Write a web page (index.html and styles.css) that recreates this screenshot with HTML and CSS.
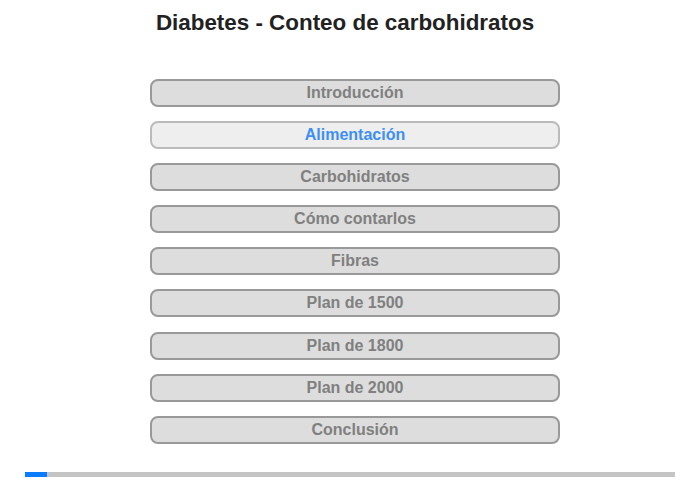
FILE: index.html
```html
<!DOCTYPE html>
<html lang="es">
<head>
    <meta charset="UTF-8">
    <meta name="viewport" content="width=device-width, initial-scale=1.0">
    <title>Diabetes - Conteo de carbohidratos</title>
    <link rel="stylesheet" href="styles.css">
</head>
<body>
    <h1 class="title">Diabetes - Conteo de carbohidratos</h1>

    <nav class="menu">
        <a href="#" class="menu-item">Introducción</a>
        <a href="#" class="menu-item active">Alimentación</a>
        <a href="#" class="menu-item">Carbohidratos</a>
        <a href="#" class="menu-item">Cómo contarlos</a>
        <a href="#" class="menu-item">Fibras</a>
        <a href="#" class="menu-item">Plan de 1500</a>
        <a href="#" class="menu-item">Plan de 1800</a>
        <a href="#" class="menu-item">Plan de 2000</a>
        <a href="#" class="menu-item">Conclusión</a>
    </nav>

    <div class="progress">
        <div class="progress-fill" style="width: 22px;"></div>
    </div>
</body>
</html>
```

FILE: styles.css
```css
body {
    font-family: "Liberation Sans", Arial, sans-serif;
    margin: 0;
    padding: 0;
    background-color: #fff;
}

.title {
    margin: 0;
    padding-top: 9px;
    font-size: 22.4px;
    line-height: 27px;
    font-weight: bold;
    color: #222;
    text-align: center;
    margin-left: -10px;
}

.menu {
    display: flex;
    flex-direction: column;
    align-items: center;
    gap: 14.1px;
    margin-top: 43px;
    padding-left: 10px;
}

.menu-item {
    box-sizing: border-box;
    width: 410px;
    height: 28px;
    line-height: 24px;
    border: 2px solid #999;
    border-radius: 8px;
    background-color: #ddd;
    color: #808080;
    font-size: 16px;
    font-weight: bold;
    text-align: center;
    text-decoration: none;
}

.menu-item.active {
    background-color: #eee;
    border-color: #bbb;
    color: #3d8ef5;
}

.progress {
    margin: 28px 25px 0;
    height: 5px;
    background-color: #c4c4c4;
}

.progress-fill {
    height: 100%;
    background-color: #0a7cff;
}
```
